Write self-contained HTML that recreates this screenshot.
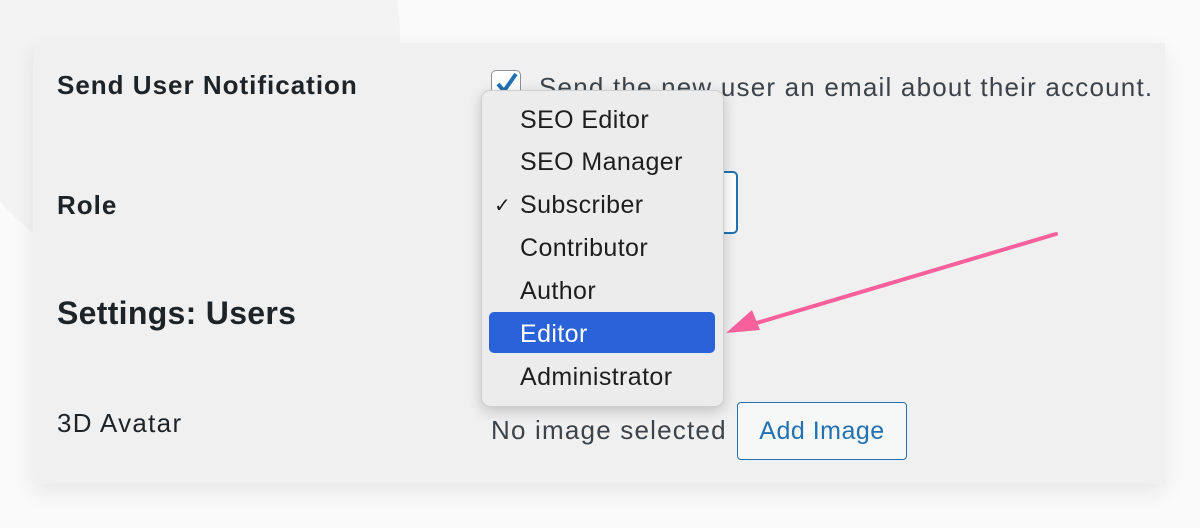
<!DOCTYPE html>
<html><head><style>
body{margin:0;width:1200px;height:528px;background:#fafafa;position:relative;overflow:hidden;font-family:"Liberation Sans",sans-serif;color:#1d2327}
.bg{position:absolute;left:-60px;top:-200px;width:460px;height:480px;border-radius:50%;background:#f3f3f4}
.panel{position:absolute;left:33px;top:43px;width:1132px;height:441px;background:#f0f0f1;box-shadow:0 8px 20px rgba(0,0,0,.08)}
.t{position:absolute;white-space:nowrap}
.b{font-weight:bold;font-size:26px;letter-spacing:1px}
.menu{position:absolute;left:481px;top:90px;width:241px;height:315px;background:#ececec;border:1px solid #cfcfcf;border-radius:9px;box-shadow:0 4px 14px rgba(0,0,0,.2)}
.it{position:absolute;left:38px;font-size:25px;letter-spacing:0.4px;color:#1e1e1e}
</style></head><body>
<div class="bg"></div>
<div class="panel"></div>
<div class="t b" style="left:57px;top:70px">Send User Notification</div>
<div class="t b" style="left:57px;top:190px">Role</div>
<div class="t b" style="left:57px;top:295px;font-size:32px;letter-spacing:0.3px">Settings: Users</div>
<div class="t" style="left:57px;top:408px;font-size:26px;letter-spacing:1.3px">3D Avatar</div>
<div style="position:absolute;left:491px;top:70px;width:28px;height:28px;border:1.5px solid #8c8f94;border-radius:5px;background:#fff"></div>
<svg style="position:absolute;left:492px;top:68px" width="30" height="30"><path d="M6 16 L12 23 L24 6" stroke="#2271b1" stroke-width="4" fill="none"/></svg>
<div class="t" style="left:539px;top:72px;font-size:26px;letter-spacing:1.2px;color:#3c434a">Send the new user an email about their account.</div>
<div style="position:absolute;left:600px;top:171px;width:134px;height:59px;border:2px solid #2271b1;border-radius:5px;background:#fff"></div>
<div class="t" style="left:491px;top:415px;font-size:26px;letter-spacing:1.2px;color:#3c434a">No image selected</div>
<div style="position:absolute;left:737px;top:402px;width:168px;height:56px;border:1.5px solid #2271b1;border-radius:4px;background:#f6f7f7;color:#2271b1;font-size:25px;letter-spacing:0.5px;line-height:56px;text-align:center">Add Image</div>
<div class="menu">
<div class="it" style="top:15px">SEO Editor</div>
<div class="it" style="top:57px">SEO Manager</div>
<div class="it" style="top:100px">Subscriber</div>
<div class="it" style="left:12px;top:102px;font-size:20px">✓</div>
<div class="it" style="top:143px">Contributor</div>
<div class="it" style="top:186px">Author</div>
<div style="position:absolute;left:7px;top:221px;width:226px;height:41px;background:#2a62d9;border-radius:5px"></div>
<div class="it" style="top:229px;color:#fff">Editor</div>
<div class="it" style="top:272px">Administrator</div>
</div>
<svg style="position:absolute;left:0;top:0" width="1200" height="528"><line x1="1056" y1="234" x2="750" y2="325" stroke="#f7609a" stroke-width="4" stroke-linecap="round"/><path d="M726 333 L752 310 L760 330 Z" fill="#f7609a"/></svg>
</body></html>
